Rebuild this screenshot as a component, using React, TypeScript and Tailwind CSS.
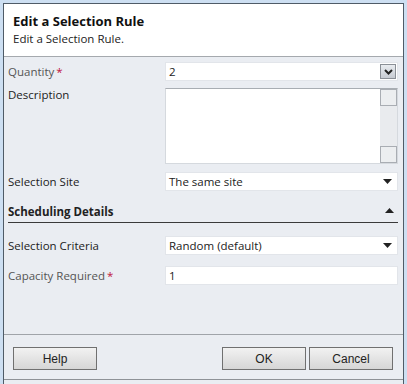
import React from "react";

const font = { fontFamily: '"Open Sans", "Noto Sans", sans-serif' };

function Label({ text, required, muted }: { text: string; required?: boolean; muted?: boolean }) {
  return (
    <div className={`w-[157px] shrink-0 text-[11.5px] ${muted ? "text-[#555]" : "text-[#222]"}`}>
      {text}
      {required && <span className="text-[#c0143c] ml-[2px]">*</span>}
    </div>
  );
}

function Caret({ up }: { up?: boolean }) {
  return (
    <svg width="9" height="5" viewBox="0 0 9 5" className="block">
      {up ? <polygon points="0,5 9,5 4.5,0" fill="#222" /> : <polygon points="0,0 9,0 4.5,5" fill="#222" />}
    </svg>
  );
}

function Select({ value }: { value: string }) {
  return (
    <div className="flex-1 h-[19px] bg-white border border-[#e2e5ea] flex items-center justify-between pl-[3px] pr-[5px] text-[11.5px] text-[#222]">
      <span>{value}</span>
      <Caret />
    </div>
  );
}

function Button({ text }: { text: string }) {
  return (
    <button
      className="w-[84px] h-[23px] border border-[#707070] bg-gradient-to-b from-[#f2f2f2] to-[#d6d6d6] text-[12px] text-[#222]"
      style={{ fontFamily: '"Liberation Sans", Arial, sans-serif' }}
    >
      {text}
    </button>
  );
}

export default function App() {
  return (
    <div className="w-[407px] h-[384px] bg-[#cddff2] pt-[3px] px-[3px]" style={font}>
      <div className="h-full border border-b-0 border-[#4f5b67] bg-[#eaedf2] flex flex-col">
        {/* header */}
        <div className="h-[53px] bg-white border-b border-[#a5a9ae] pl-[9px] pt-[8px]">
          <div className="text-[13px] font-bold text-[#111] leading-[18px]">Edit a Selection Rule</div>
          <div className="text-[11.5px] text-[#222] leading-[16px] mt-[1px]">Edit a Selection Rule.</div>
        </div>

        {/* body */}
        <div className="flex-1 pl-[4px] pr-[5px] pt-[5px]">
          <div className="flex items-center h-[19px]">
            <Label text="Quantity" required muted />
            <div className="flex-1 h-[19px] bg-white border border-[#e2e5ea] flex items-center justify-between pl-[3px] pr-[1px] text-[11.5px] text-[#222]">
              <span>2</span>
              <div className="w-[16px] h-[15px] border border-[#8a8f96] bg-gradient-to-b from-[#e9ecf0] to-[#c6cbd2] flex items-center justify-center">
                <svg width="9" height="6" viewBox="0 0 9 6">
                  <polyline points="1,1 4.5,4.5 8,1" fill="none" stroke="#222" strokeWidth="2" />
                </svg>
              </div>
            </div>
          </div>

          <div className="flex mt-[7px]">
            <div className="-mt-[2px]">
              <Label text="Description" />
            </div>
            <div className="flex-1 h-[76px] bg-white border border-[#d5d9de] border-t-[#a8adb3] flex justify-end">
              <div className="w-[17px] h-full bg-[#e9ebee] flex flex-col justify-between">
                <div className="h-[17px] border border-[#a9adb3] bg-[#eceef0]" />
                <div className="h-[17px] border border-[#a9adb3] bg-[#eceef0]" />
              </div>
            </div>
          </div>

          <div className="flex items-center mt-[8px] h-[19px]">
            <Label text="Selection Site" />
            <Select value="The same site" />
          </div>

          <div className="flex items-center justify-between mt-[10px] h-[22px] border-b border-[#3a3a3a] pr-[4px]">
            <div className="text-[11.5px] font-bold text-[#222]">Scheduling Details</div>
            <div className="pb-[2px]">
              <Caret up />
            </div>
          </div>

          <div className="flex items-center mt-[13px] h-[19px]">
            <Label text="Selection Criteria" />
            <Select value="Random (default)" />
          </div>

          <div className="flex items-center mt-[11px] h-[19px]">
            <Label text="Capacity Required" required muted />
            <div className="flex-1 h-[19px] bg-white border border-[#e2e5ea] flex items-center pl-[3px] text-[11.5px] text-[#222]">
              1
            </div>
          </div>
        </div>

        {/* footer */}
        <div className="h-[46px] border-t border-[#a0a4a9] border-b border-b-[#8e9297] flex items-start justify-between pl-[9px] pr-[10px] pt-[12px] mb-[4px]">
          <Button text="Help" />
          <div className="flex gap-[3px]">
            <Button text="OK" />
            <Button text="Cancel" />
          </div>
        </div>
      </div>
    </div>
  );
}
